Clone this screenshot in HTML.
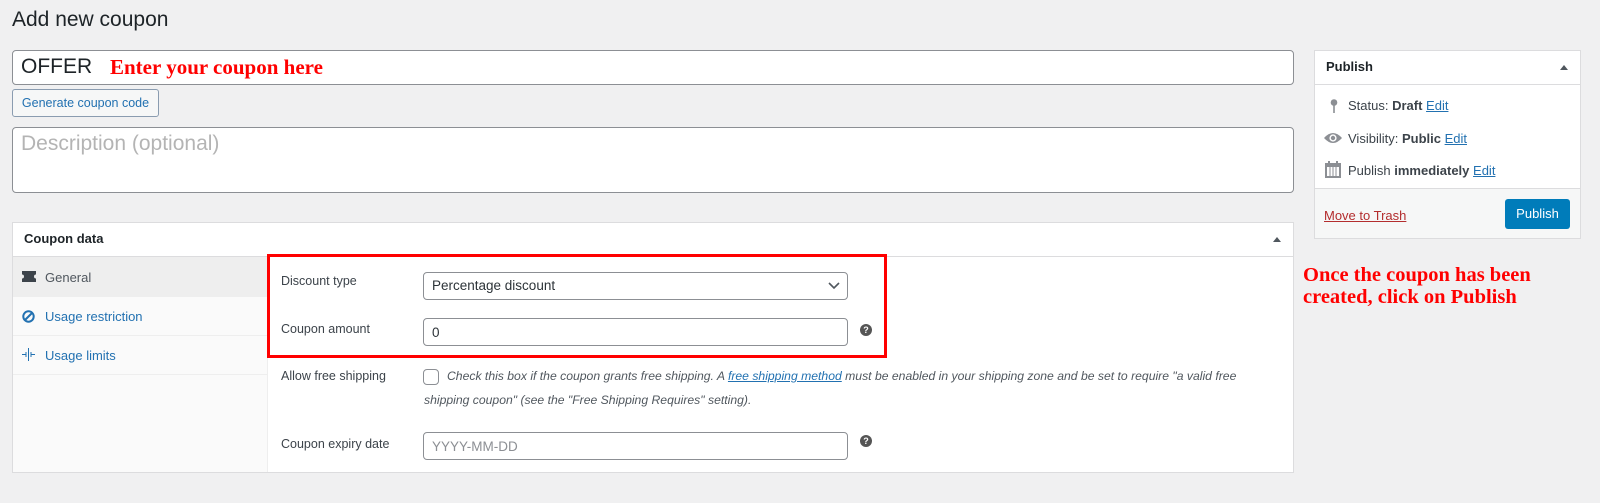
<!DOCTYPE html>
<html><head><style>
*{box-sizing:border-box;margin:0;padding:0}
body{width:1600px;height:503px;background:#f0f0f1;font-family:"Liberation Sans",sans-serif;font-size:13px;color:#3c434a;position:relative;overflow:hidden}
.a{position:absolute;white-space:nowrap}
.inp{position:absolute;background:#fff;border:1px solid #8c8f94;border-radius:4px}
.red{font-family:"Liberation Serif",serif;font-weight:bold;color:#f00;font-size:21px}
a{color:#2271b1}
.lbl{position:absolute;left:281px;font-size:12.5px;color:#3c434a}
.help{position:absolute;width:12px;height:12px;border-radius:50%;background:#555;color:#fff;font-size:9px;font-weight:bold;text-align:center;line-height:12px}
</style></head><body>
<div class="a" style="left:12px;top:8px;font-size:21px;color:#1d2327">Add new coupon</div>
<div class="inp" style="left:12px;top:50px;width:1282px;height:35px"></div>
<div class="a" style="left:21px;top:55px;font-size:21px;color:#1d2327">OFFER</div>
<div class="a red" style="left:110px;top:55px">Enter your coupon here</div>
<div class="a" style="left:12px;top:89px;width:147px;height:28px;border:1px solid #8a9cb0;border-radius:3px;background:#f6f7f7;color:#2271b1;font-size:12.5px;text-align:center;line-height:26px">Generate coupon code</div>
<div class="inp" style="left:12px;top:127px;width:1282px;height:66px"></div>
<div class="a" style="left:21px;top:132px;font-size:21px;color:#b4b4b4">Description (optional)</div>

<!-- coupon data -->
<div class="a" style="left:12px;top:222px;width:1282px;height:251px;background:#fff;border:1px solid #dcdcde"></div>
<div class="a" style="left:13px;top:256px;width:1280px;height:1px;background:#dcdcde"></div>
<div class="a" style="left:24px;top:231px;font-weight:bold;color:#1d2327;font-size:13px">Coupon data</div>
<div class="a" style="left:1273px;top:237px;width:0;height:0;border-left:4px solid transparent;border-right:4px solid transparent;border-bottom:5px solid #50575e"></div>
<div class="a" style="left:13px;top:257px;width:255px;height:215px;background:#fafafa;border-right:1px solid #eee"></div>
<div class="a" style="left:13px;top:257px;width:255px;height:40px;background:#eee"></div>
<div class="a" style="left:13px;top:335px;width:255px;height:1px;background:#eee"></div>
<div class="a" style="left:13px;top:374px;width:255px;height:1px;background:#eee"></div>
<svg class="a" style="left:22px;top:271px" width="14" height="11"><path d="M0 0H14V3.5A2 2 0 0 0 14 7.5V11H0V7.5A2 2 0 0 0 0 3.5Z" fill="#3c434a"/></svg>
<div class="a" style="left:45px;top:270px;color:#50575e">General</div>
<svg class="a" style="left:22px;top:310px" width="13" height="13"><circle cx="6.5" cy="6.5" r="5.2" fill="none" stroke="#2271b1" stroke-width="2"/><path d="M3 10L10 3" stroke="#2271b1" stroke-width="2"/></svg>
<div class="a" style="left:45px;top:309px;color:#2271b1">Usage restriction</div>
<svg class="a" style="left:22px;top:348px" width="13" height="13"><path d="M6.5 0V13M0 6.5H4M9 6.5H13M4 4V9M9 4V9" stroke="#2271b1" stroke-width="1"/></svg>
<div class="a" style="left:45px;top:348px;color:#2271b1">Usage limits</div>

<div class="a" style="left:267px;top:254px;width:620px;height:104px;border:3px solid #f00"></div>
<div class="lbl" style="top:274px">Discount type</div>
<div class="inp" style="left:423px;top:272px;width:425px;height:28px"></div>
<div class="a" style="left:432px;top:278px;font-size:13.5px;color:#2c3338">Percentage discount</div>
<svg class="a" style="left:828px;top:282px" width="12" height="8"><path d="M1 1L6 6L11 1" fill="none" stroke="#50575e" stroke-width="1.6"/></svg>
<div class="lbl" style="top:322px">Coupon amount</div>
<div class="inp" style="left:423px;top:318px;width:425px;height:28px"></div>
<div class="a" style="left:432px;top:325px;font-size:13.5px;color:#2c3338">0</div>
<div class="help" style="left:860px;top:324px">?</div>
<div class="lbl" style="top:369px">Allow free shipping</div>
<div class="a" style="left:423px;top:369px;width:16px;height:16px;border:1px solid #8c8f94;border-radius:4px;background:#fff"></div>
<div class="a" style="left:447px;top:369px;font-style:italic;font-size:12.2px;color:#50575e">Check this box if the coupon grants free shipping. A <a style="text-decoration:underline">free shipping method</a> must be enabled in your shipping zone and be set to require "a valid free</div>
<div class="a" style="left:424px;top:393px;font-style:italic;font-size:12.2px;color:#50575e">shipping coupon" (see the "Free Shipping Requires" setting).</div>
<div class="lbl" style="top:437px">Coupon expiry date</div>
<div class="inp" style="left:423px;top:432px;width:425px;height:28px"></div>
<div class="a" style="left:432px;top:439px;font-size:13.5px;color:#8c8f94">YYYY-MM-DD</div>
<div class="help" style="left:860px;top:435px">?</div>

<div class="a red" style="left:1303px;top:264px;line-height:22px;font-size:20.5px">Once the coupon has been<br>created, click on Publish</div>

<!-- publish -->
<div class="a" style="left:1314px;top:50px;width:267px;height:189px;background:#fff;border:1px solid #dcdcde"></div>
<div class="a" style="left:1315px;top:84px;width:265px;height:1px;background:#dcdcde"></div>
<div class="a" style="left:1315px;top:188px;width:265px;height:50px;background:#f6f7f7;border-top:1px solid #dcdcde"></div>
<div class="a" style="left:1326px;top:59px;font-weight:bold;color:#1d2327">Publish</div>
<div class="a" style="left:1560px;top:65px;width:0;height:0;border-left:4px solid transparent;border-right:4px solid transparent;border-bottom:5px solid #50575e"></div>
<svg class="a" style="left:1330px;top:99px" width="8" height="14"><circle cx="4" cy="3.5" r="3.3" fill="#8c8f94"/><rect x="3.2" y="5" width="1.6" height="9" fill="#8c8f94"/></svg>
<div class="a" style="left:1348px;top:98px">Status: <b>Draft</b> <a style="text-decoration:underline">Edit</a></div>
<svg class="a" style="left:1323px;top:131px" width="20" height="14"><path d="M1 7Q10 -3 19 7Q10 17 1 7Z" fill="#8c8f94"/><circle cx="10" cy="7" r="3.6" fill="#fff"/><circle cx="10" cy="7" r="2.2" fill="#8c8f94"/></svg>
<div class="a" style="left:1348px;top:131px">Visibility: <b>Public</b> <a style="text-decoration:underline">Edit</a></div>
<svg class="a" style="left:1325px;top:161px" width="16" height="17"><rect x="0" y="2" width="16" height="15" fill="#8c8f94"/><rect x="2" y="6" width="12" height="9" fill="#fff"/><path d="M5 6V15M8 6V15M11 6V15" stroke="#8c8f94"/><rect x="3" y="0" width="2" height="4" fill="#8c8f94"/><rect x="11" y="0" width="2" height="4" fill="#8c8f94"/></svg>
<div class="a" style="left:1348px;top:163px">Publish <b>immediately</b> <a style="text-decoration:underline">Edit</a></div>
<div class="a" style="left:1324px;top:208px;color:#b32d2e;text-decoration:underline">Move to Trash</div>
<div class="a" style="left:1505px;top:199px;width:65px;height:30px;background:#007cba;border-radius:3px;color:#fff;text-align:center;line-height:30px">Publish</div>
</body></html>
